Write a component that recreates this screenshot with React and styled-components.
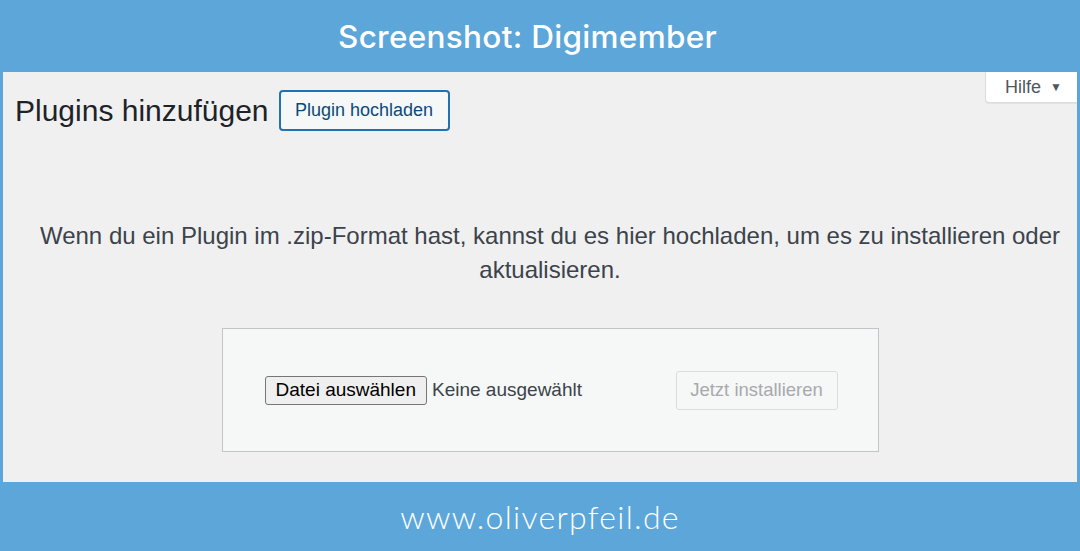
import React from "react";
import styled, { createGlobalStyle } from "styled-components";

const Global = createGlobalStyle`
  html, body { margin: 0; padding: 0; }
  body { background: #5da6d9; font-family: "Liberation Sans", Arial, sans-serif; }
`;

const Frame = styled.div`
  width: 1080px;
  height: 551px;
  display: flex;
  flex-direction: column;
  background: #5da6d9;
  overflow: hidden;
`;

const Banner = styled.div`
  height: ${p => p.$h}px;
  display: flex;
  align-items: center;
  justify-content: center;
  padding-right: ${p => p.$shift || 0}px;
  color: #ffffff;
  font-family: ${p => p.$thin ? 'Lato, "Open Sans", sans-serif' : '"Inter", sans-serif'};
  font-weight: ${p => p.$thin ? 300 : 500};
  font-size: ${p => p.$size}px;
  letter-spacing: ${p => p.$spacing}px;
  flex-shrink: 0;
`;

const Panel = styled.div`
  margin: 0 3px;
  height: 410px;
  background: #f0f0f1;
  position: relative;
  display: flex;
  flex-direction: column;
`;

const HelpTab = styled.div`
  position: absolute;
  top: 0;
  right: 0;
  width: 92px;
  height: 31px;
  box-sizing: border-box;
  background: #ffffff;
  border: 1px solid #dcdcde;
  border-top: none;
  border-right: none;
  border-radius: 0 0 0 4px;
  box-shadow: 0 1px 1px rgba(0,0,0,0.06);
  display: flex;
  align-items: center;
  justify-content: center;
  gap: 9px;
  padding-left: 4px;
  color: #50575e;
  font-size: 18px;
`;

const Caret = styled.span`
  font-size: 12px;
  color: #50575e;
`;

const HeaderRow = styled.div`
  display: flex;
  align-items: center;
  gap: 10px;
  padding: 18px 0 0 12px;
`;

const Title = styled.h1`
  margin: 0;
  font-weight: 400;
  font-size: 30px;
  color: #1d2327;
`;

const OutlineButton = styled.button`
  height: 41px;
  width: 171px;
  padding: 0;
  border: 2px solid #2271b1;
  border-radius: 4px;
  background: #f6f7f7;
  color: #0a4b78;
  font-family: inherit;
  font-size: 18px;
`;

const Body = styled.div`
  padding-left: 20px;
  display: flex;
  flex-direction: column;
`;

const Intro = styled.p`
  margin: 88px 0 0;
  text-align: center;
  font-size: 24px;
  line-height: 34px;
  color: #3c434a;
`;

const UploadBox = styled.div`
  margin: 41px auto 0;
  width: 657px;
  height: 124px;
  box-sizing: border-box;
  border: 1px solid #c3c4c7;
  background: #f6f7f7;
  display: flex;
  align-items: center;
  padding: 0 40px 0 42px;
`;

const FileButton = styled.button`
  height: 29px;
  padding: 0 10px;
  border: 1px solid #767676;
  border-radius: 3px;
  background: #efefef;
  color: #000000;
  font-family: inherit;
  font-size: 19px;
`;

const FileLabel = styled.span`
  margin-left: 5px;
  font-size: 19px;
  color: #3c434a;
`;

const DisabledButton = styled.button`
  margin-left: auto;
  height: 39px;
  width: 162px;
  padding: 0;
  border: 1px solid #dcdcde;
  border-radius: 3px;
  background: #f6f7f7;
  color: #a7aaad;
  font-family: inherit;
  font-size: 18.5px;
`;

export default function App() {
  return (
    <Frame>
      <Global />
      <Banner $h={72} $size={31.5} $spacing={0.3} $shift={25}>Screenshot: Digimember</Banner>
      <Panel>
        <HelpTab>Hilfe <Caret>▼</Caret></HelpTab>
        <HeaderRow>
          <Title>Plugins hinzufügen</Title>
          <OutlineButton>Plugin hochladen</OutlineButton>
        </HeaderRow>
        <Body>
          <Intro>
            Wenn du ein Plugin im .zip-Format hast, kannst du es hier hochladen, um es zu installieren oder aktualisieren.
          </Intro>
          <UploadBox>
            <FileButton>Datei auswählen</FileButton>
            <FileLabel>Keine ausgewählt</FileLabel>
            <DisabledButton disabled>Jetzt installieren</DisabledButton>
          </UploadBox>
        </Body>
      </Panel>
      <Banner $h={69} $size={32} $spacing={1.3} $thin>www.oliverpfeil.de</Banner>
    </Frame>
  );
}
